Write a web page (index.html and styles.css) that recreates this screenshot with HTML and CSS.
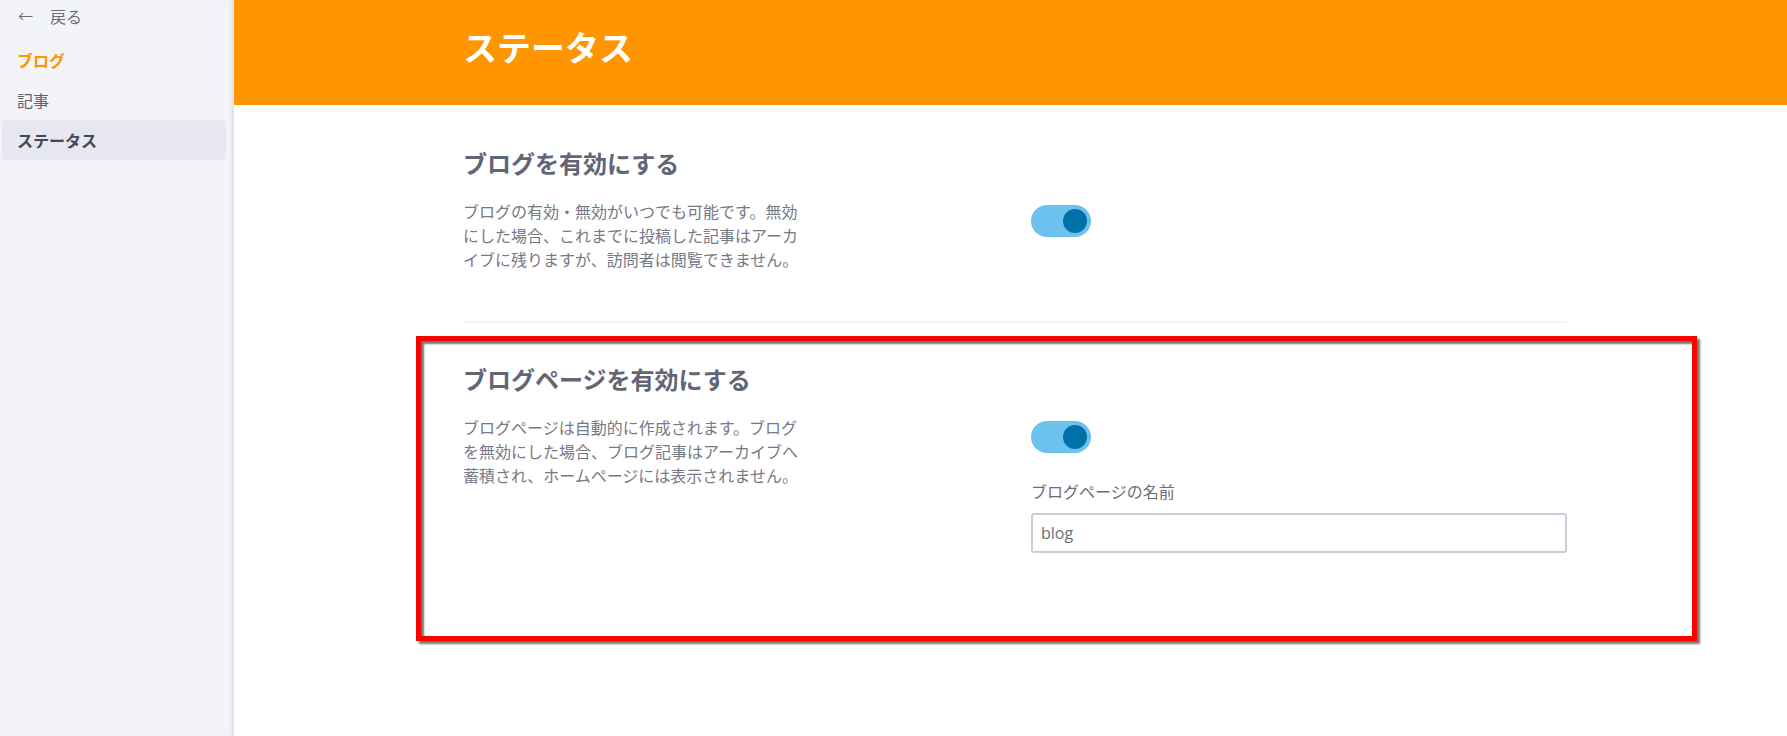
FILE: index.html
```html
<!DOCTYPE html>
<html lang="ja">
<head>
<meta charset="utf-8">
<title>ステータス</title>
<link rel="stylesheet" href="styles.css">
</head>
<body>
<div class="app">
  <aside class="sidebar">
    <a class="back" href="#"><span class="back-arrow">←</span><span>戻る</span></a>
    <div class="nav-group">ブログ</div>
    <a class="nav-item" href="#">記事</a>
    <a class="nav-item active" href="#">ステータス</a>
  </aside>
  <main class="main">
    <header class="page-header">
      <div class="container">
        <h1 class="page-title">ステータス</h1>
      </div>
    </header>
    <div class="container">
      <section class="setting setting-first">
        <h2 class="setting-title">ブログを有効にする</h2>
        <div class="setting-row">
          <p class="setting-desc">ブログの有効・無効がいつでも可能です。無効にした場合、これまでに投稿した記事はアーカイブに残りますが、訪問者は閲覧できません。</p>
          <div class="setting-controls">
            <span class="toggle on"><span class="knob"></span></span>
          </div>
        </div>
      </section>
      <section class="setting setting-second">
        <div class="annotation"></div>
        <h2 class="setting-title">ブログページを有効にする</h2>
        <div class="setting-row">
          <p class="setting-desc">ブログページは自動的に作成されます。ブログを無効にした場合、ブログ記事はアーカイブへ蓄積され、ホームページには表示されません。</p>
          <div class="setting-controls">
            <span class="toggle on"><span class="knob"></span></span>
            <label class="field-label" for="page-name">ブログページの名前</label>
            <input class="text-input" id="page-name" type="text" value="blog">
          </div>
        </div>
      </section>
    </div>
  </main>
</div>
</body>
</html>
```
FILE: styles.css
```css
* {
  box-sizing: border-box;
}

html, body {
  margin: 0;
  padding: 0;
  height: 100%;
}

body {
  font-family: "Noto Sans CJK JP", "Noto Sans", sans-serif;
  background: #ffffff;
  color: #6b6e7a;
}

.app {
  display: flex;
  min-height: 736px;
}

/* Sidebar */
.sidebar {
  width: 234px;
  flex: 0 0 234px;
  background: #f3f4f8;
  box-shadow: inset -4px 0 4px -2px rgba(40, 44, 70, 0.10);
  padding: 0 8px 0 2px;
  display: flex;
  flex-direction: column;
}

.back {
  display: flex;
  align-items: center;
  height: 32px;
  padding-left: 16px;
  font-size: 16px;
  line-height: 24px;
  color: #6b6e7a;
  text-decoration: none;
  margin-bottom: 8px;
}

.back-arrow {
  width: 32px;
  font-size: 15px;
  color: #6b6e7a;
}

.nav-group {
  height: 40px;
  display: flex;
  align-items: center;
  padding-left: 15px;
  font-size: 16px;
  font-weight: 700;
  color: #ff9500;
}

.nav-item {
  height: 40px;
  display: flex;
  align-items: center;
  padding-left: 15px;
  font-size: 16px;
  color: #5f6270;
  text-decoration: none;
  border-radius: 4px;
}

.nav-item.active {
  background: #e6e7f0;
  font-weight: 700;
  color: #45475a;
}

/* Main */
.main {
  flex: 1 1 auto;
  min-width: 0;
}

.container {
  width: 1104px;
  margin-left: 229px;
}

.page-header {
  background: #ff9500;
  height: 105px;
  padding-top: 27px;
}

.page-title {
  margin: 0;
  font-size: 34px;
  line-height: 40px;
  font-weight: 700;
  color: #ffffff;
}

.setting {
  position: relative;
}

.setting-first {
  padding: 42px 0 50px;
  border-bottom: 2px solid #f1f2f6;
}

.setting-second {
  padding: 40px 0 40px;
}

.setting-title {
  margin: 0 0 20px;
  font-size: 24px;
  line-height: 32px;
  font-weight: 700;
  color: #626573;
}

.setting-row {
  display: grid;
  grid-template-columns: 1fr 1fr;
  column-gap: 32px;
}

.setting-desc {
  margin: 0;
  max-width: 344px;
  font-size: 16px;
  line-height: 24px;
  color: #777985;
}

.setting-controls {
  display: flex;
  flex-direction: column;
  align-items: flex-start;
  padding-top: 6px;
}

.toggle {
  position: relative;
  display: block;
  width: 60px;
  height: 32px;
  border-radius: 16px;
  background: #6cc1ed;
}

.toggle .knob {
  position: absolute;
  top: 4px;
  right: 4px;
  width: 24px;
  height: 24px;
  border-radius: 50%;
  background: #0070a8;
}

.field-label {
  display: block;
  margin-top: 26px;
  font-size: 16px;
  line-height: 24px;
  color: #6b6e7a;
}

.text-input {
  display: block;
  width: 100%;
  height: 40px;
  margin: 10px 0 0;
  padding: 0 8px;
  border: 2px solid #cbcdda;
  border-radius: 3px;
  font-family: "Open Sans", "Noto Sans", sans-serif;
  font-size: 16px;
  color: #6b6e7a;
  background: #ffffff;
  outline: none;
}

/* Highlight annotation drawn over the second setting */
.annotation {
  position: absolute;
  left: -47px;
  top: 13px;
  width: 1281px;
  height: 305px;
  border: 5px solid #ff0000;
  box-shadow: 3px 3px 2px rgba(0, 0, 0, 0.55), inset 3px 3px 2px rgba(0, 0, 0, 0.55);
  pointer-events: none;
}
```
